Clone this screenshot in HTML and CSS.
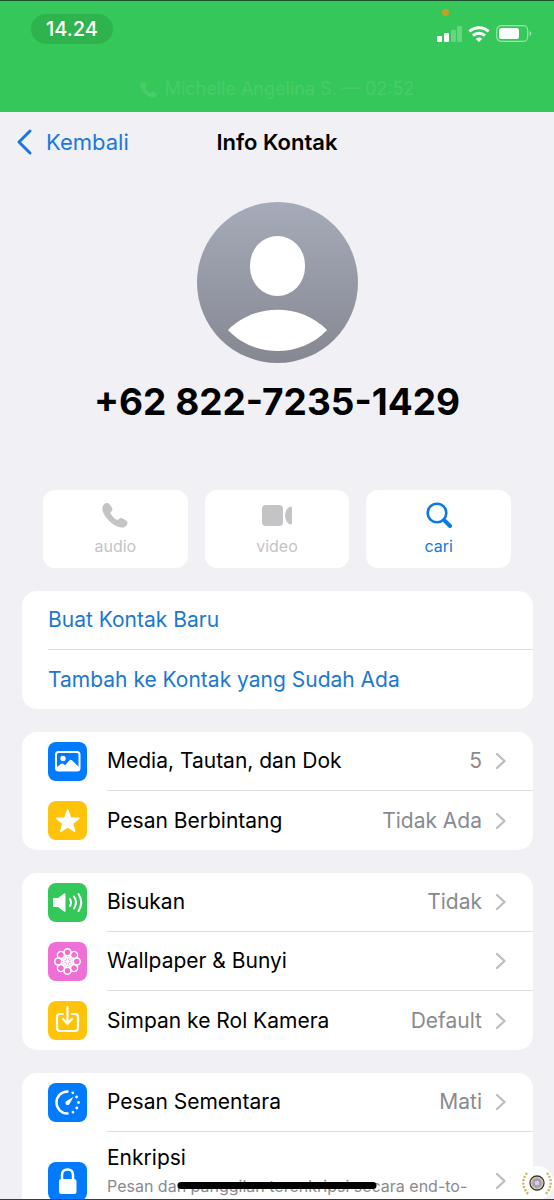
FILE: index.html
```html
<!DOCTYPE html>
<html lang="id">
<head>
  <meta charset="UTF-8">
  <meta name="viewport" content="width=device-width, initial-scale=1.0">
  <title>Info Kontak</title>
  <link rel="stylesheet" href="styles.css">
</head>
<body>
  <!-- Shared icons -->
  <svg class="sprite" aria-hidden="true">
    <symbol id="chevron" viewBox="0 0 12 18">
      <path d="M2 2l7.500 7-7.500 7" fill="none" stroke="currentColor" stroke-width="2.300" stroke-linecap="round" stroke-linejoin="round"/>
    </symbol>
    <symbol id="phone" viewBox="0 0 26 26">
      <path d="M2 2.400C3.800.4 6.400.3 7.900 2.500l2 3.200c.9 1.600.6 2.800-.6 3.900-1 .9-1 1.500-.3 2.600 1.400 2.200 3.100 3.900 5.200 5.200 1.100.7 1.900.6 2.800-.4 1.100-1.200 2.400-1.400 3.900-.5l3.100 2c2 1.300 2 3.400.4 5.200-2.500 2.600-6.800 2.300-11.200-.1C8.300 20.900 4 16.500 1.600 11.600-.2 7.900-.2 4.800 2 2.400z" fill="currentColor"/>
    </symbol>
  </svg>

  <div class="screen">
    <!-- Status bar with the running call -->
    <header class="status">
      <div class="status-row">
        <span class="clock">14.24</span>
        <div class="indicators">
          <span class="mic-dot"></span>
          <svg width="25" height="16" viewBox="0 0 25 16" fill="#fff" aria-label="Sinyal">
            <rect x="0" y="10" width="5" height="6" rx="1"/>
            <rect x="7" y="7" width="5" height="9" rx="1"/>
            <g opacity=".25"><rect x="14" y="4" width="5" height="12" rx="1"/><rect x="20" y="0" width="5" height="16" rx="1"/></g>
          </svg>
          <svg width="22" height="16" viewBox="0 0 22 16" aria-label="Wi-Fi">
            <g fill="none" stroke="#fff" stroke-width="3">
              <path d="M1.500 5.500a14 14 0 0 1 19 0"/>
              <path d="M5 9.600a9 9 0 0 1 12 0"/>
            </g>
            <path d="M11 16l-3.200-3.300a4.600 4.600 0 0 1 6.400 0z" fill="#fff"/>
          </svg>
          <svg width="36" height="17" viewBox="0 0 36 17" aria-label="Baterai">
            <rect x=".7" y=".7" width="31" height="15.600" rx="4.500" fill="none" stroke="#fff" stroke-opacity=".5" stroke-width="1.200"/>
            <rect x="3" y="3" width="20" height="11" rx="2.500" fill="#fff"/>
            <path d="M33.500 6v5c2.400-1 2.400-4 0-5z" fill="#fff" opacity=".5"/>
          </svg>
        </div>
      </div>
      <div class="call">
        <svg width="17" height="17"><use href="#phone"/></svg>
        <span>Michelle Angelina S. — 02:52</span>
      </div>
    </header>

    <nav class="nav">
      <a class="back" href="#">
        <svg width="16" height="26" viewBox="0 0 16 26"><path d="M14 2L3 13l11 11" fill="none" stroke="currentColor" stroke-width="3" stroke-linecap="round" stroke-linejoin="round"/></svg>
        Kembali
      </a>
      <h1>Info Kontak</h1>
    </nav>

    <main>
      <section class="profile">
        <svg class="avatar" width="161" height="161" viewBox="0 0 161 161" aria-hidden="true">
          <defs>
            <linearGradient id="shade" x1="0" y1="0" x2="0" y2="1">
              <stop offset="0" stop-color="#a6abb9"/>
              <stop offset="1" stop-color="#858892"/>
            </linearGradient>
          </defs>
          <circle cx="80.500" cy="80.500" r="80.500" fill="url(#shade)"/>
          <rect x="53" y="34" width="55" height="60" rx="27.500" ry="29" fill="#fff"/>
          <path d="M31 128C57 101 104 101 130 128C104 156 57 156 31 128z" fill="#fff"/>
        </svg>
        <h2>+62 822-7235-1429</h2>
      </section>

      <div class="actions">
        <button type="button" disabled>
          <svg width="26" height="26"><use href="#phone"/></svg>
          audio
        </button>
        <button type="button" disabled>
          <svg width="30" height="26" viewBox="0 0 30 26" fill="currentColor">
            <rect x="0" y="3" width="21" height="21" rx="4"/>
            <path d="M28.500 4.500q1.500-.3 1.500 1.500v15q0 1.800-1.500 1.500C25 21.500 23 17 23 13.500s2-8 5.500-9z"/>
          </svg>
          video
        </button>
        <button type="button">
          <svg width="26" height="26" viewBox="0 0 26 26" fill="none" stroke="currentColor">
            <circle cx="11" cy="11" r="9.300" stroke-width="2.600"/>
            <path d="M18 18l6 6" stroke-width="4" stroke-linecap="round"/>
          </svg>
          cari
        </button>
      </div>

      <ul class="card links">
        <li><a class="row" href="#"><span class="row-body">Buat Kontak Baru</span></a></li>
        <li><a class="row" href="#"><span class="row-body">Tambah ke Kontak yang Sudah Ada</span></a></li>
      </ul>

      <ul class="card">
        <li><a class="row" href="#">
          <svg class="icon blue" viewBox="0 0 39 39">
            <rect x="8" y="10" width="23.500" height="18.500" rx="2.500" fill="none" stroke="#fff" stroke-width="2"/>
            <circle cx="15" cy="16.500" r="2.700" fill="#fff"/>
            <path d="M9 25l4-3.200q1-.8 2 0l2 1.500 4.500-5q1.200-1.200 2.400 0L31 25v2q0 1.500-1.500 1.500h-19Q9 28.500 9 27z" fill="#fff"/>
          </svg>
          <span class="row-body"><span class="label">Media, Tautan, dan Dok</span><span class="value">5</span><svg class="chevron"><use href="#chevron"/></svg></span>
        </a></li>
        <li><a class="row" href="#">
          <svg class="icon yellow" viewBox="0 0 39 39">
            <path d="M19.700 9l3 7.900 8.100.4-6.300 5.200 2.200 7.900-7-4.500-7 4.500 2.200-7.900-6.300-5.200 8.100-.4z" fill="#fff" stroke="#fff" stroke-width="1.500" stroke-linejoin="round"/>
          </svg>
          <span class="row-body"><span class="label">Pesan Berbintang</span><span class="value">Tidak Ada</span><svg class="chevron"><use href="#chevron"/></svg></span>
        </a></li>
      </ul>

      <ul class="card">
        <li><a class="row" href="#">
          <svg class="icon green" viewBox="0 0 39 39">
            <path d="M5 16q0-1 1-1h4l6-4.500q1.500-1 1.500.8v16.400q0 1.800-1.500.8L10 24H6q-1 0-1-1z" fill="#fff"/>
            <g fill="none" stroke="#fff" stroke-width="2" stroke-linecap="round">
              <path d="M22 16q2 3.500 0 7"/>
              <path d="M26 13.500q4 6 0 12"/>
              <path d="M30.500 11q5.500 8.500 0 17"/>
            </g>
          </svg>
          <span class="row-body"><span class="label">Bisukan</span><span class="value">Tidak</span><svg class="chevron"><use href="#chevron"/></svg></span>
        </a></li>
        <li><a class="row" href="#">
          <!-- Flower: eight round petals and a spoke between each pair -->
          <svg class="icon pink" viewBox="0 0 39 39">
            <defs>
              <g id="petal">
                <circle cx="19.500" cy="10.200" r="3.500"/>
                <path d="M17.400 13.200L19.500 17l2.100-3.800"/>
              </g>
            </defs>
            <g fill="none" stroke="#fff" stroke-width="1.500">
              <use href="#petal"/>
              <use href="#petal" transform="rotate(45 19.500 19.500)"/>
              <use href="#petal" transform="rotate(90 19.500 19.500)"/>
              <use href="#petal" transform="rotate(135 19.500 19.500)"/>
              <use href="#petal" transform="rotate(180 19.500 19.500)"/>
              <use href="#petal" transform="rotate(225 19.500 19.500)"/>
              <use href="#petal" transform="rotate(270 19.500 19.500)"/>
              <use href="#petal" transform="rotate(315 19.500 19.500)"/>
            </g>
            <circle cx="19.500" cy="19.500" r="1.700" fill="#fff"/>
          </svg>
          <span class="row-body"><span class="label">Wallpaper &amp; Bunyi</span><svg class="chevron"><use href="#chevron"/></svg></span>
        </a></li>
        <li><a class="row" href="#">
          <svg class="icon yellow" viewBox="0 0 39 39" fill="none" stroke="#fff" stroke-width="2.200" stroke-linecap="round" stroke-linejoin="round">
            <path d="M15 13h-3q-3 0-3 3v11q0 3 3 3h15q3 0 3-3V16q0-3-3-3h-3"/>
            <path d="M19.500 6v16.500m-4.500-4.500l4.500 4.800 4.500-4.800"/>
          </svg>
          <span class="row-body"><span class="label">Simpan ke Rol Kamera</span><span class="value">Default</span><svg class="chevron"><use href="#chevron"/></svg></span>
        </a></li>
      </ul>

      <ul class="card">
        <li><a class="row" href="#">
          <svg class="icon blue" viewBox="0 0 39 39">
            <path d="M19.500 8.500a11 11 0 0 0 0 22" fill="none" stroke="#fff" stroke-width="2.500" stroke-linecap="round"/>
            <path d="M24.800 9.800h.01M28.500 14h.01M30.500 19.500h.01M28.800 25h.01M25 29.200h.01" stroke="#fff" stroke-width="2.800" stroke-linecap="round"/>
            <path d="M25.500 13.800L21.500 21a2.200 2.200 0 1 1-3-3z" fill="#fff"/>
          </svg>
          <span class="row-body"><span class="label">Pesan Sementara</span><span class="value">Mati</span><svg class="chevron"><use href="#chevron"/></svg></span>
        </a></li>
        <li><a class="row tall" href="#">
          <svg class="icon blue" viewBox="0 0 39 39">
            <path d="M14 18v-5q0-5.500 5.500-5.500T25 13v5" fill="none" stroke="#fff" stroke-width="2.500"/>
            <rect x="11" y="17" width="17.500" height="15" rx="2.500" fill="#fff"/>
          </svg>
          <span class="row-body">
            <span class="label">Enkripsi<small>Pesan dan panggilan terenkripsi secara end-to-</small></span>
            <svg class="chevron"><use href="#chevron"/></svg>
          </span>
        </a></li>
      </ul>
    </main>

    <div class="home-bar"></div>
    <!-- Laurel emblem in the corner -->
    <svg class="emblem" width="34" height="34" viewBox="0 0 34 34" aria-hidden="true">
      <circle cx="17" cy="17" r="17" fill="#fff"/>
      <g fill="none" stroke="#cdb368" stroke-width="2.400" stroke-dasharray="2 1.500">
        <path d="M7 7Q-1 17 8 28"/>
        <path d="M27 7q8 10-1 21"/>
      </g>
      <circle cx="17" cy="17" r="7" fill="#fff" stroke="#34343c" stroke-width="1.300"/>
      <circle cx="17" cy="17" r="5.300" fill="#a39bc6" stroke="#d4bc70" stroke-width="1.300"/>
      <circle cx="17" cy="17" r="2.300" fill="#d5cfe4"/>
    </svg>
  </div>
</body>
</html>
```
FILE: styles.css
```css
* {
  box-sizing: border-box;
}
body {
  margin: 0;
  font-family: Inter, "Liberation Sans", sans-serif;
  font-size: 22px;
  line-height: 28px;
  background: #f0f0f5;
  color: #000;
}
h1, h2, ul {
  margin: 0;
  padding: 0;
}
a {
  color: inherit;
  text-decoration: none;
}
svg {
  display: block;
  flex: none;
}
.sprite {
  position: absolute;
  width: 0;
  height: 0;
}
/* One phone screen, the list runs off its bottom edge */
.screen {
  position: relative;
  height: 100vh;
  overflow: hidden;
  border-bottom: 1px solid #3c3c3e;
}

/* Status bar */
.status {
  background: #35c759;
  border-top: 1px solid #17502a;
  padding: 13px 0 9px;
}
.status-row {
  display: flex;
  justify-content: space-between;
  align-items: center;
  padding: 0 22px 0 31px;
}
.clock {
  padding: 1px 15px;
  border-radius: 15px;
  background: #2fb34f;
  color: #fff;
  font-size: 20px;
  font-weight: 500;
}
.indicators {
  position: relative;
  display: flex;
  align-items: center;
  gap: 6px;
  padding-top: 9px;
}
.mic-dot {
  position: absolute;
  top: -7px;
  left: 5px;
  width: 7px;
  height: 7px;
  border-radius: 50%;
  background: #c5a022;
}
.call {
  display: flex;
  justify-content: center;
  align-items: center;
  gap: 8px;
  padding-top: 31px;
  color: #4acb69;
  font-size: 18px;
}

/* Navigation */
.nav {
  display: grid;
  grid-template-columns: 1fr auto 1fr;
  align-items: center;
  padding: 16px;
}
.back {
  display: flex;
  align-items: center;
  gap: 14px;
  color: #1a78dc;
}
.nav h1 {
  font-size: 22px;
  font-weight: 600;
}

/* Avatar and number */
.profile {
  display: flex;
  flex-direction: column;
  align-items: center;
  gap: 16px;
  padding-top: 30px;
}
.profile h2 {
  font-size: 37px;
  line-height: 46px;
  font-weight: 700;
}

/* Call buttons */
.actions {
  display: grid;
  grid-template-columns: repeat(3, 1fr);
  gap: 17px;
  padding: 65px 43px 23px;
}
.actions button {
  display: flex;
  flex-direction: column;
  align-items: center;
  gap: 6px;
  padding: 12px 0 10px;
  border: 0;
  border-radius: 12px;
  background: #fff;
  color: #0b79e8;
  font: inherit;
  font-size: 16px;
  line-height: 24px;
}
.actions button:disabled {
  color: #c4c4c6;
}

/* Grouped lists */
.card {
  margin: 0 21px 23px 22px;
  border-radius: 15px;
  background: #fff;
  font-size: 21px;
  list-style: none;
  overflow: hidden;
}
.row {
  display: flex;
  align-items: center;
  gap: 20px;
  padding-left: 26px;
}
.row-body {
  flex: 1;
  display: flex;
  align-items: center;
  gap: 13px;
  min-height: 59px;
  padding-right: 26px;
  border-bottom: 1px solid #dcdcdf;
}
.card li:last-child .row-body {
  border-bottom: 0;
}
.links {
  color: #1a78d2;
}
.label {
  flex: 1;
}
.value {
  color: #8a8a8e;
}
.icon {
  width: 39px;
  height: 39px;
  border-radius: 8px;
}
.blue { background: #007aff; }
.yellow { background: #ffc40a; }
.green { background: #34c759; }
.pink { background: #ee6fd6; }
.chevron {
  width: 12px;
  height: 18px;
  color: #bdbdc0;
}
.tall .row-body {
  min-height: 98px;
}
.tall .label {
  padding-bottom: 22px;
}
.label small {
  display: block;
  padding-top: 3px;
  font-size: 16px;
  line-height: 22px;
  color: #8a8a8e;
}

/* Overlays */
.home-bar {
  position: absolute;
  bottom: 10px;
  left: 50%;
  width: 199px;
  height: 7px;
  border-radius: 4px;
  background: #000;
  transform: translateX(-50%);
}
.emblem {
  position: absolute;
  right: 0;
  bottom: -1px;
}
```
